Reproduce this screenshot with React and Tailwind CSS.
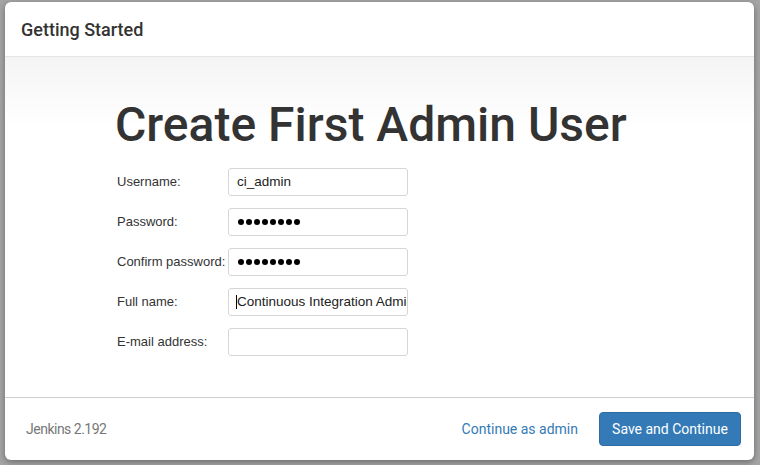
import React from 'react';

const roboto = { fontFamily: 'Roboto, "Liberation Sans", sans-serif' };

function Field({ label, children }) {
  return (
    <div className="flex items-center h-[28px]">
      <label className="w-[111px] ml-[5px] text-[13px] leading-4 text-[#333]">{label}</label>
      <div className="w-[180px] h-[28px] border border-[#d6d6d6] rounded-[3px] bg-white pl-[8px] flex items-center overflow-hidden whitespace-nowrap text-[13.5px] text-[#222]">
        {children}
      </div>
    </div>
  );
}

function Dots() {
  return (
    <div className="flex gap-[2px] ml-[1px]">
      {Array.from({ length: 8 }).map((_, i) => (
        <span key={i} className="w-[6px] h-[6px] rounded-full bg-black" />
      ))}
    </div>
  );
}

export default function App() {
  return (
    <div
      className="w-[760px] h-[465px] bg-[#a4a4a4] pt-[2px] pl-[5px] overflow-hidden"
      style={{ fontFamily: '"Liberation Sans", Arial, sans-serif' }}
    >
      <div className="w-[749px] h-[458px] bg-white rounded-[6px] flex flex-col overflow-hidden shadow-[0_2px_6px_rgba(0,0,0,0.35)]">
        <div className="h-[55px] shrink-0 border-b border-[#e5e5e5] pl-[16px] flex items-center">
          <h4 className="text-[18px] font-medium text-[#333]" style={roboto}>
            Getting Started
          </h4>
        </div>

        <div className="flex-1 bg-[linear-gradient(to_bottom,#f4f4f4,#ffffff_70px)] pl-[107px] pt-[42px]">
          <h1 className="ml-[3px] text-[48px] leading-[1.1] font-medium text-[#333]" style={roboto}>
            Create First Admin User
          </h1>
          <div className="mt-[16px] flex flex-col gap-[12px]">
            <Field label="Username:">ci_admin</Field>
            <Field label="Password:">
              <Dots />
            </Field>
            <Field label="Confirm password:">
              <Dots />
            </Field>
            <Field label="Full name:">
              <span className="w-px h-[14px] bg-black -ml-[1px] shrink-0" />
              <span>Continuous Integration Admin</span>
            </Field>
            <Field label="E-mail address:" />
          </div>
        </div>

        <div
          className="h-[63px] shrink-0 border-t border-[#cfcfcf] flex items-center pl-[21px] pr-[13px] text-[14px]"
          style={roboto}
        >
          <span className="text-[#777] tracking-[-0.5px]">Jenkins 2.192</span>
          <span className="ml-auto mr-[21px] text-[#337ab7]">Continue as admin</span>
          <button className="h-[34px] w-[142px] rounded-[4px] bg-[#337ab7] border border-[#2e6da4] text-white text-[14px]">
            Save and Continue
          </button>
        </div>
      </div>
    </div>
  );
}
